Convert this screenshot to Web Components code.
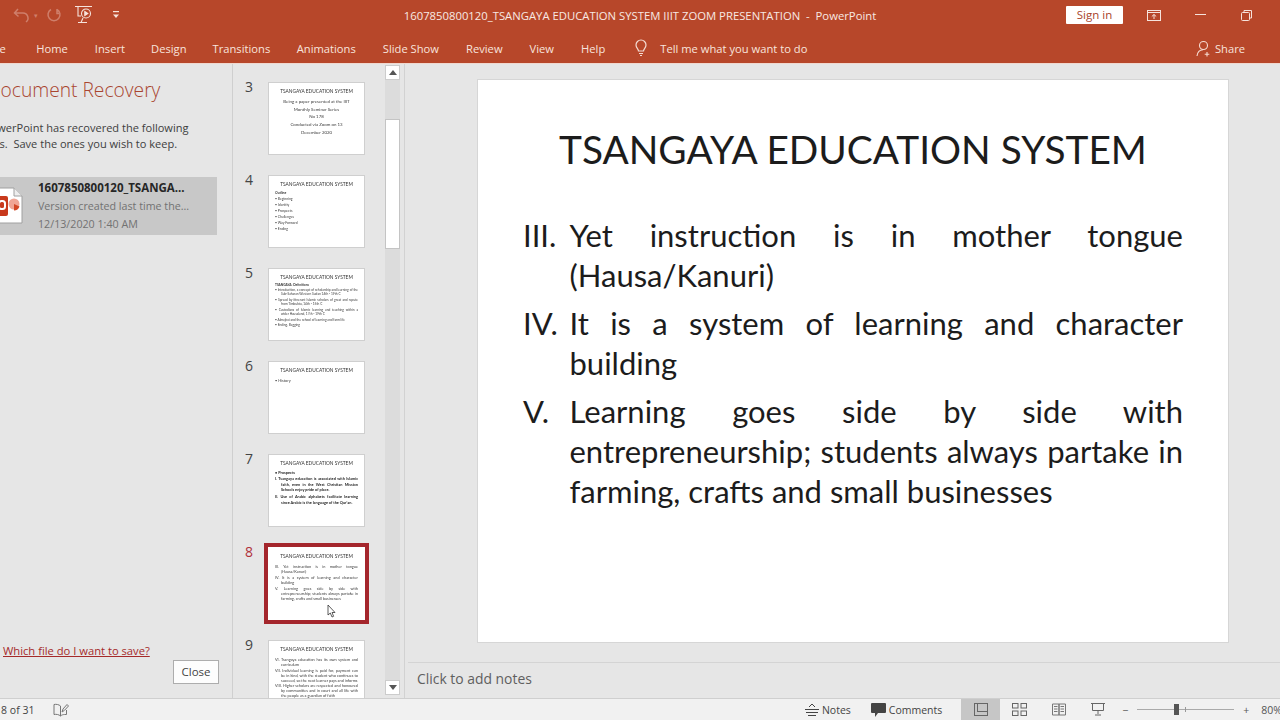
<!DOCTYPE html>
<html><head><meta charset="utf-8"><style>
html,body{margin:0;padding:0;width:1280px;height:720px;overflow:hidden;background:#e6e6e6;font-family:"Open Sans","Noto Sans",sans-serif}
</style></head><body>
<ppt-app></ppt-app>
<script>
const ic={
undo:'<svg width="20" height="18" viewBox="0 0 20 18" fill="none" stroke="#cf7f6b" stroke-width="1.5"><path d="M6 3 2.500 7 6.500 10.500M3 7h8a5 5 0 0 1 3 9"/></svg>',
redo:'<svg width="16" height="18" viewBox="0 0 16 18" fill="none" stroke="#cf7f6b" stroke-width="1.5"><path d="M11 3.500a6 6 0 1 1-6 0M11 3v4.500h2"/></svg>',
show:'<svg width="18" height="20" viewBox="0 0 18 20" fill="none" stroke="#f6e3dc" stroke-width="1.1"><path d="M0 1.500h17M3 2v9h3"/><circle cx="11" cy="8.500" r="4.500"/><path d="M9.800 6.500v4l3-2z" fill="#f6e3dc"/><path d="M3 17.500h9M8 13l-2 4.500"/></svg>',
more:'<svg width="8" height="10" viewBox="0 0 8 10" fill="#f6e3dc"><rect x="1" y="1" width="6" height="1.200"/><path d="M1 4.500h6L4 8z"/></svg>',
bulb:'<svg width="14" height="18" viewBox="0 0 14 18" fill="none" stroke="#f4dcd3" stroke-width="1.200"><path d="M4.500 12c0-2-2.500-3-2.500-6a5 5 0 0 1 10 0c0 3-2.500 4-2.500 6zM5 14.500h4M6 16.500h2"/></svg>',
rib:'<svg width="14" height="11" viewBox="0 0 14 11" fill="none" stroke="#f6e3dc"><rect x=".5" y=".5" width="13" height="10"/><path d="M.5 2.500h13M7 9V4.500M4.800 6.500 7 4.500l2.200 2"/></svg>',
min:'<svg width="11" height="2" viewBox="0 0 11 2"><rect width="11" height="1" fill="#f6e3dc"/></svg>',
rest:'<svg width="11" height="11" viewBox="0 0 11 11" fill="none" stroke="#f6e3dc"><rect x=".5" y="2.500" width="8" height="8" rx="1"/><path d="M3 2.500V.5h7.500V8H8.500"/></svg>',
share:'<svg width="16" height="17" viewBox="0 0 16 17" fill="none" stroke="#f6dcd2" stroke-width="1.100"><circle cx="7.500" cy="5.500" r="4"/><path d="M1 16c.5-4 3-6 6-6.200M11 12v4.500M8.700 14.200h4.600"/></svg>',
ppt:'<svg width="24" height="38" viewBox="0 0 24 38"><path d="M-3 1h17l8 8v27H-3z" fill="#fff" stroke="#a0a0a0"/><path d="M14 1v8h8" fill="#eee" stroke="#a0a0a0"/><circle cx="14" cy="17" r="5.500" fill="#f0a595"/><path d="M14 17v6.500a6 6 0 0 0 5.500-4z" fill="#d24726"/><rect x="-10" y="9" width="18" height="20" rx="2" fill="#c8391c"/><rect x="-1" y="14" width="6" height="8" rx="2.500" fill="none" stroke="#fff" stroke-width="2"/></svg>',
notes:'<svg width="14" height="14" viewBox="0 0 14 14" fill="none" stroke="#444" stroke-width="1"><path d="M4 4 7 1l3 3M0 6.500h14M1 9.500h12M3 12.500h8"/></svg>',
comm:'<svg width="15" height="14" viewBox="0 0 15 14"><path d="M1 0h13a1 1 0 0 1 1 1v8a1 1 0 0 1-1 1H7l-3 4v-4H1a1 1 0 0 1-1-1V1a1 1 0 0 1 1-1z" fill="#444"/></svg>',
normal:'<svg width="14" height="13" viewBox="0 0 14 13" fill="none" stroke="#666"><rect x=".5" y=".5" width="13" height="12"/><rect x="3.500" y=".5" width="10" height="8"/></svg>',
sorter:'<svg width="15" height="13" viewBox="0 0 15 13" fill="none" stroke="#666"><rect x=".5" y=".5" width="5.500" height="4.500"/><rect x="9" y=".5" width="5.500" height="4.500"/><rect x=".5" y="8" width="5.500" height="4.500"/><rect x="9" y="8" width="5.500" height="4.500"/></svg>',
read:'<svg width="14" height="13" viewBox="0 0 14 13" fill="none" stroke="#777"><path d="M.5 1h6.500v11H.5zM7 1h6.500v11H7zM2 3.500h3.500M2 6h3.500M2 8.500h3.500M8.500 3.500H12M8.500 6H12M8.500 8.500H12"/></svg>',
pres:'<svg width="14" height="13" viewBox="0 0 14 13" fill="none" stroke="#666"><path d="M0 .5h14M1.500 1v6.500h11V1M7 7.500V11M4 12h6"/></svg>',
edit:'<svg width="16" height="14" viewBox="0 0 16 14" fill="none" stroke="#777"><path d="M7.500 3C6 1.500 3 1 1 1.500v10c2-.5 5 0 6.500 1.500 1-1 2.500-1.500 4-1.500h2V7M7.500 3v10M9 9l1-3 4-4.500 1.500 1.500-4 4.300z"/></svg>',
up:'<svg width="8" height="5" viewBox="0 0 8 5"><path d="M0 5h8L4 0z" fill="#555"/></svg>',
down:'<svg width="8" height="5" viewBox="0 0 8 5"><path d="M0 0h8L4 5z" fill="#555"/></svg>',
cursor:'<svg width="9" height="14" viewBox="0 0 9 14"><path d="M1 1v10l2.300-2 1.700 4 1.600-.7L5 8.500h3z" fill="#fff" stroke="#333" stroke-width=".8"/></svg>'
};
function def(name,css,html){customElements.define(name,class extends HTMLElement{connectedCallback(){if(this.shadowRoot)return;const s=this.attachShadow({mode:'open'});s.innerHTML='<style>'+css+'</style>'+(typeof html==='function'?html(this):html)}})}

def('title-bar',`:host{display:grid;grid-template-columns:1fr auto 1fr;align-items:center;height:30px;background:#b7472a;color:#f8e9e3}
.l{display:flex;align-items:center;padding-left:12px}
.t{font-size:11.300px;white-space:pre;padding-top:1px}
.r{display:flex;align-items:center;justify-content:flex-end}
.s{background:#fff;color:#a8442c;font-size:11.500px;width:57px;height:18px;line-height:18px;text-align:center;border-radius:1px}
.b{display:flex;justify-content:center;width:46px}
.u{color:#cf7f6b;font-size:7px;margin:0 8px 0 2px}`,
()=>`<div class="l">${ic.undo}<span class="u">▾</span>${ic.redo}<span style="width:13px"></span>${ic.show}<span style="width:19px"></span>${ic.more}</div>
<div class="t">1607850800120_TSANGAYA EDUCATION SYSTEM IIIT ZOOM PRESENTATION  -  PowerPoint</div>
<div class="r"><div class="s">Sign in</div><div class="b" style="margin-left:8px">${ic.rib}</div><div class="b">${ic.min}</div><div class="b" style="margin-right:11px">${ic.rest}</div></div>`);

def('tab-bar',`:host{display:flex;align-items:center;height:34px;padding-top:3px;background:#b7472a;color:#f7e4dd;font-size:11.200px;white-space:nowrap;border-bottom:1px solid #f0d8cf;box-sizing:border-box}
.tabs{display:flex;align-items:center;margin-left:-12px}
span{margin-right:27px}
.tell{display:flex;align-items:center;gap:12px;margin-left:2px}
.sh{margin-left:auto;display:flex;align-items:center;gap:3px;margin-right:35px}
.sh span{margin:0}`,
()=>`<div class="tabs"><span style="margin-right:30.500px">File</span><span>Home</span><span style="margin-right:26px">Insert</span><span style="margin-right:26px">Design</span><span style="margin-right:26.500px">Transitions</span><span>Animations</span><span>Slide Show</span><span>Review</span><span>View</span><span>Help</span></div>
<div class="tell">${ic.bulb}<span style="margin:0">Tell me what you want to do</span></div>
<div class="sh">${ic.share}<span>Share</span></div>`);

def('recovery-item',`:host{display:grid;grid-template-columns:24px 1fr;column-gap:14px;height:58px;background:#c8c8c8;width:217px;box-sizing:border-box;align-items:center;white-space:nowrap}
.i{height:40px;display:flex;align-items:center;overflow:hidden}
.a{font-size:11.500px;font-weight:700;color:#262626;line-height:18px}
.b{font-size:10.700px;color:#727272;line-height:18px}`,
()=>`<div class="i">${ic.ppt}</div><div><div class="a">1607850800120_TSANGA...</div><div class="b">Version created last time the...</div><div class="b">12/13/2020 1:40 AM</div></div>`);

def('recovery-pane',`:host{display:flex;flex-direction:column;width:233px;flex:none;background:#e6e6e6;overflow:hidden;border-right:1px solid #cfcfcf;box-sizing:border-box;white-space:nowrap}
h1{font-weight:300;font-size:19.200px;line-height:28px;color:#a9452f;margin:12px 0 0 -13px}
p{font-size:11.050px;line-height:16px;color:#404040;margin:16px 0 0 -16px;white-space:pre}
.sp{flex:1}
.f{display:flex;flex-direction:column;padding-left:3px}
a{font-size:11.200px;color:#a52a2a;text-decoration:underline;line-height:16px}
.c{align-self:flex-end;width:46px;height:24px;margin:1px 13px 14px 0;border:1px solid #adadad;background:#fdfdfd;font-size:11.500px;color:#444;text-align:center;line-height:22px;box-sizing:border-box}`,
`<h1>Document Recovery</h1><p>PowerPoint has recovered the following
files.  Save the ones you wish to keep.</p>
<div style="height:25px"></div><recovery-item></recovery-item><div class="sp"></div>
<div class="f"><a>Which file do I want to save?</a><div class="c">Close</div></div>`);

def('slide-thumb',`:host{display:grid;grid-template-columns:35px 97px;height:93px;color:#444;font-size:14px;box-sizing:border-box}
:host([sel]){color:#b0313a}
.n{padding-left:12px;line-height:16px;margin-top:-3px}
.p{width:97px;height:73px;background:#fff;box-sizing:border-box;border:1px solid #cfcfcf;padding:5px 6px 0;font:3.850px/5px Lato,sans-serif;color:#3a3a3a;overflow:hidden}
:host([sel]) .p{outline:4px solid #a4262c;border:1px solid #fff}
.w{filter:blur(.3px)}
.t{text-align:center;font-size:4.800px;line-height:6px;margin-bottom:5px;color:#333;white-space:nowrap}`,
h=>`<div class="n">${h.getAttribute('n')}</div><div class="p"><div class="w"><div class="t">TSANGAYA EDUCATION SYSTEM</div><slot></slot></div></div>`);

def('thumb-list',`:host{display:flex;width:172px;flex:none;background:#e6e6e6;overflow:hidden;box-sizing:border-box;border-right:1px solid #d2d2d2}
.l{width:152px;padding-top:18px;overflow:hidden;box-sizing:border-box;flex:none}
.sb{width:15px;flex:none;height:630px;background:#dcdcdc;display:flex;flex-direction:column;margin-top:1px}
.ar{height:15px;background:#fff;border:1px solid #ccc;box-sizing:border-box;display:flex;align-items:center;justify-content:center;flex:none}
.th{height:130px;margin-top:39px;background:#fff;border:1px solid #c4c4c4;box-sizing:border-box;flex:none}
.sp{flex:1}`,
`<div class="l"><slot></slot></div><div class="sb"><div class="ar">${ic.up}</div><div class="th"></div><div class="sp"></div><div class="ar">${ic.down}</div></div>`);

def('slide-item',`:host{display:grid;grid-template-columns:46.500px 1fr;margin-bottom:8px}
.b{text-align:justify}`,
`<div><slot name="n"></slot></div><div class="b"><slot></slot></div>`);

def('main-slide',`:host{display:block;width:752px;height:564px;background:#fff;border:1px solid #d6d6d6;box-sizing:border-box;color:#1c1c1c;font-family:Lato,sans-serif;flex:none}
h2{margin:0;padding-top:43px;text-align:center;font-weight:400;font-size:38.800px;line-height:52px;white-space:nowrap}
.c{padding:40px 45px 0 45px;font-size:31px;line-height:40px}`,
`<h2>TSANGAYA EDUCATION SYSTEM</h2><div class="c"><slot></slot></div>`);

def('edit-area',`:host{display:flex;flex-direction:column;flex:1;background:#e6e6e6;min-width:0}
.s{height:598px;padding:15px 0 0 72px;box-sizing:border-box;display:flex;flex:none}
.n{border-top:1px solid #d4d4d4;flex:1;font-size:13.900px;color:#5f5f5f;padding:6px 0 0 9px;margin-left:3px}`,
`<div class="s"><slot></slot></div><div class="n">Click to add notes</div>`);

def('status-bar',`:host{display:flex;align-items:center;height:22px;background:#f1f1f1;border-top:1px solid #cfcfcf;box-sizing:border-box;font-size:10.500px;color:#444;white-space:nowrap}
.l{display:flex;align-items:center;margin-left:-25px;gap:19px}
.r{margin-left:auto;display:flex;align-items:center;height:100%;margin-right:-2px}
.it{display:flex;align-items:center;gap:3px}
.v{width:39px;display:flex;height:100%;align-items:center;justify-content:center}
.z{display:flex;align-items:center;margin-left:5px;gap:6px;color:#555}
.tr{width:97px;height:1px;background:#aaa;position:relative;margin:0 3px}
.k{position:absolute;left:37px;top:-5px;width:5px;height:11px;background:#555}
.m{position:absolute;left:48px;top:-2px;width:1px;height:5px;background:#999}`,
()=>`<div class="l"><span>Slide 8 of 31</span>${ic.edit}</div>
<div class="r"><div class="it">${ic.notes}<span>Notes</span></div><div class="it" style="margin:0 19px 0 20px">${ic.comm}<span>Comments</span></div>
<div class="v" style="background:#c6c6c6">${ic.normal}</div><div class="v">${ic.sorter}</div><div class="v">${ic.read}</div><div class="v">${ic.pres}</div>
<div class="z"><span>−</span><div class="tr"><div class="k"></div><div class="m"></div></div><span>+</span><span style="margin-left:6px">80%</span></div></div>`);

def('ppt-app',`:host{display:flex;flex-direction:column;width:1280px;height:720px;overflow:hidden}
.m{display:flex;height:634px;flex:none}
status-bar{flex:none}
.cur{position:absolute;left:327px;top:604px;line-height:0}
b{font-weight:700;color:#333}
.c{text-align:center;line-height:7.700px;font-size:4.400px;margin-top:-1px}
.h{padding-left:6px;text-indent:-6px;text-align:justify;margin-bottom:1px}
.j{padding-left:6px;text-indent:-6px;text-align:justify;margin-bottom:.6px}
.s{line-height:6px;font-size:3.400px;margin-top:-2px}
.d{color:#222;font-weight:700;line-height:5.800px;margin-top:-1px}`,
`<title-bar></title-bar><tab-bar></tab-bar><div class="m"><recovery-pane></recovery-pane><thumb-list>
<slide-thumb n="3"><div class="c">Being a paper presented at the IIIT<br>Monthly Seminar Series<br>No 178<br>Conducted via Zoom on 13<br>December 2020</div></slide-thumb>
<slide-thumb n="4"><div class="s"><b>Outline</b><br>• Beginning<br>• Identity<br>• Prospects<br>• Challenges<br>• Way Forward<br>• Ending</div></slide-thumb>
<slide-thumb n="5"><div style="font-size:3.200px;line-height:4.700px;margin-top:-2px"><b>TSANGAYA: Definitions</b><div class="j">• Introduction, a concept of scholarship and learning of the Sub-Saharan Western Sudan 14th - 19th C</div><div class="j">• Spread by itinerant Islamic scholars of great and repute from Timbuktu, 14th - 15th C</div><div class="j">• Custodians of Islamic learning and teaching within a wider Hausaland, 17th - 19th C</div><div class="j">• Almajirai and the school of learning and farm life</div>• Ending, Begging</div></slide-thumb>
<slide-thumb n="6">• History</slide-thumb>
<slide-thumb n="7"><div class="d">• Prospects<div class="j">I. Tsangaya education is associated with Islamic faith, even in the West Christian Mission Schools enjoy pride of place.</div><div class="j">II. Use of Arabic alphabets facilitate learning since Arabic is the language of the Qur'an.</div></div></slide-thumb>
<slide-thumb n="8" sel><div class="h">III. Yet instruction is in mother tongue (Hausa/Kanuri)</div><div class="h">IV. It is a system of learning and character building</div><div class="h">V. Learning goes side by side with entrepreneurship; students always partake in farming, crafts and small businesses</div></slide-thumb>
<slide-thumb n="9"><div class="j">VI. Tsangaya education has its own system and curriculum</div><div class="j">VII. Individual learning is paid for, payment can be in kind, with the student who continues to succeed, so the next learner pays and informs</div><div class="j">VIII. Higher scholars are respected and honoured by communities and in court and all life with the people as a guardian of faith</div></slide-thumb>
</thumb-list><edit-area><main-slide>
<slide-item><span slot="n">III.</span>Yet instruction is in mother tongue (Hausa/Kanuri)</slide-item>
<slide-item><span slot="n">IV.</span>It is a system of learning and character building</slide-item>
<slide-item><span slot="n">V.</span>Learning goes side by side with entrepreneurship; students always partake in farming, crafts and small businesses</slide-item>
</main-slide></edit-area></div><status-bar></status-bar><div class="cur">${ic.cursor}</div>`);
</script></body></html>
